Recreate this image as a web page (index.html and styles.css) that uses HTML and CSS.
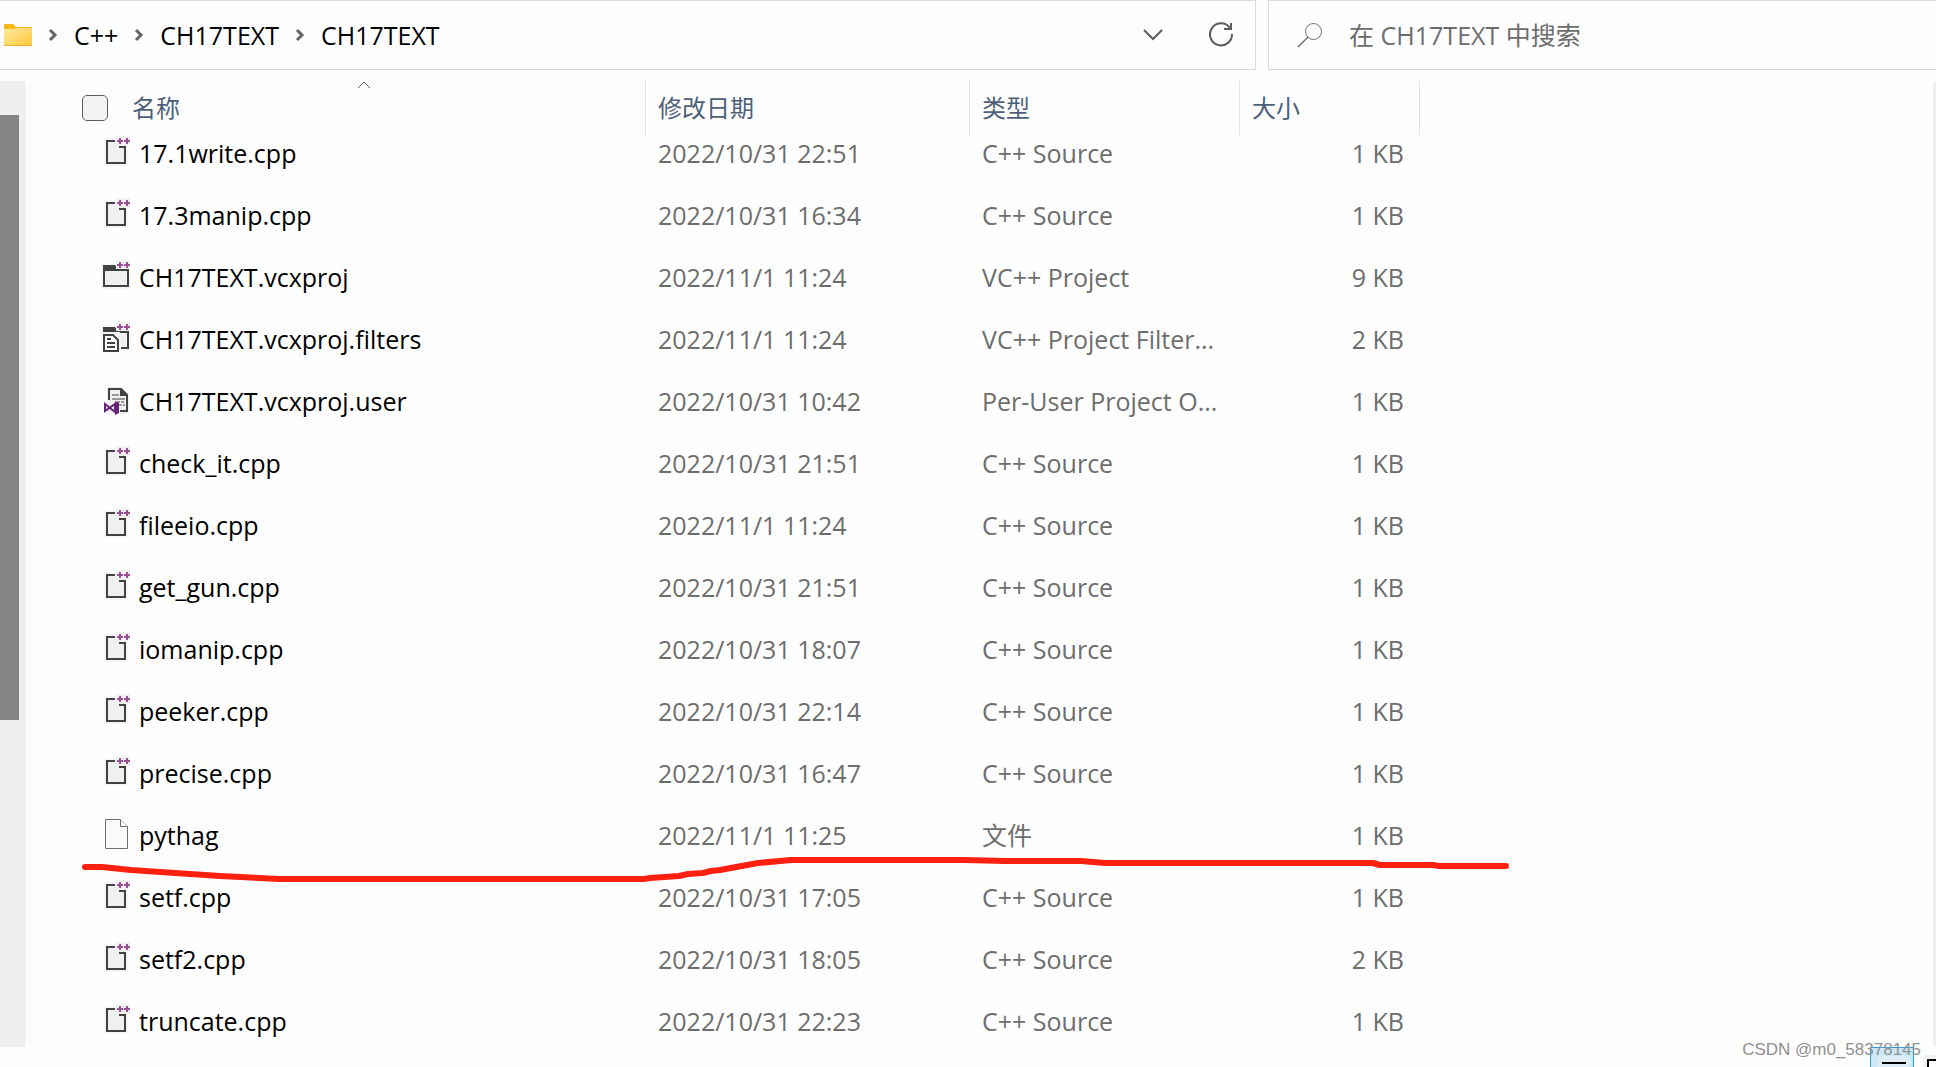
FILE: index.html
```html
<!DOCTYPE html>
<html lang="zh-CN">
<head>
    <meta charset="UTF-8">
    <meta name="viewport" content="width=device-width, initial-scale=1.0">
    <title>CH17TEXT</title>

    <link rel="stylesheet" href="styles.css">
</head>
<body>

    <!-- shared icons -->
    <svg class="icon-defs" aria-hidden="true">
        <symbol id="pluses" viewBox="0 0 32 36">
            <path d="M15 1h14v9H15z" fill="#f0eff1"/>
            <path d="M16 6h6M19 3v6M23 6h6M26 3v6" stroke="#9b4f96" stroke-width="2"/>
        </symbol>
        <symbol id="cpp" viewBox="0 0 32 36">
            <path d="M4 4h13v4h9v22H4z" fill="#f0eff1" stroke="#f6f6f6" stroke-width="2"/>
            <path d="M14 6H6v22h18V12h-6" fill="none" stroke="#424242" stroke-width="2"/>
            <use href="#pluses"/>
        </symbol>
        <symbol id="project" viewBox="0 0 32 36">
            <path d="M1 5h28v25H1z" fill="#f6f6f6"/>
            <path d="M3 11h24v16H3z" fill="#f0eff1" stroke="#424242" stroke-width="2"/>
            <path d="M2 6h12l2 3h6v2H2z" fill="#424242"/>
            <use href="#pluses"/>
        </symbol>
        <symbol id="filters" viewBox="0 0 32 36">
            <path d="M1 5h28v25H1z" fill="#f6f6f6"/>
            <path d="M2 6h12l2 3h4v2H2z" fill="#424242"/>
            <path d="M19 11h8v16h-7" fill="#f0eff1" stroke="#424242" stroke-width="2"/>
            <path d="M3 14h9l5 5v11H3z" fill="#fff" stroke="#424242" stroke-width="2"/>
            <path d="M6 18h4M6 22h8M6 26h8" stroke="#424242" stroke-width="2"/>
            <use href="#pluses"/>
        </symbol>
        <symbol id="user" viewBox="0 0 32 36">
            <path d="M6 4h16l6 7v20H6z" fill="#f0eff1"/>
            <path d="M8 17V6h12l6 6v16h-7" fill="none" stroke="#424242" stroke-width="2"/>
            <path d="M19 5l8 8h-8z" fill="#424242"/>
            <path d="M11 12h7M11 16h13" stroke="#424242"/>
            <path d="M16 19h8M18 22h6" stroke="#424242" stroke-dasharray="3 1"/>
            <path d="M4 21l10 8V21L4 28z" fill="none" stroke="#68217a" stroke-width="2"/>
            <path d="M14 18l4 2v10l-4 2z" fill="#68217a"/>
        </symbol>
        <symbol id="blank" viewBox="0 0 32 36">
            <path d="M4.5 2.5h15l7 7v22h-22z" fill="#fafafa" stroke="#6e6e6e"/>
            <path d="M19.500 2.500v7h7" fill="#fff" stroke="#6e6e6e"/>
        </symbol>
        <symbol id="crumb" viewBox="0 0 10 14">
            <path d="M2 2l5 5-5 5" fill="none" stroke="#666" stroke-width="3"/>
        </symbol>
    </svg>

    <header class="toolbar">
        <nav class="address" aria-label="路径">
            <svg class="folder" viewBox="0 0 28 22">
                <defs>
                    <linearGradient id="folder-fill" x1="0" y1="0" x2="1" y2="1">
                        <stop offset="0" stop-color="#ffe9a2"/>
                        <stop offset="1" stop-color="#ffc937"/>
                    </linearGradient>
                </defs>
                <path d="M0 1a1 1 0 0 1 1-1h8l3 3h16v6H0z" fill="#fbb917"/>
                <path d="M0 5h10l3-1h15v17a1 1 0 0 1-1 1H1a1 1 0 0 1-1-1z" fill="url(#folder-fill)"/>
                <path d="M0 21.500h28" stroke="#edb02a"/>
            </svg>
            <svg class="crumb-arrow"><use href="#crumb"/></svg>
            <a href="#">C++</a>
            <svg class="crumb-arrow"><use href="#crumb"/></svg>
            <a href="#">CH17TEXT</a>
            <svg class="crumb-arrow"><use href="#crumb"/></svg>
            <a href="#">CH17TEXT</a>
            <div class="address-buttons">
                <button type="button" aria-label="以前的位置">
                    <svg viewBox="0 0 26 26"><path d="M4 8l9 9 9-9" fill="none" stroke="#5c5c5c" stroke-width="2"/></svg>
                </button>
                <button type="button" aria-label="刷新">
                    <svg viewBox="0 0 26 26"><path d="M22 6a11 11 0 1 0 2 6M23 1v6h-7" fill="none" stroke="#5c5c5c" stroke-width="2"/></svg>
                </button>
            </div>
        </nav>
        <label class="search">
            <svg viewBox="0 0 26 26"><circle cx="16.500" cy="9.500" r="8" fill="none" stroke="#6d6d6d"/><path d="M11 15L1 25" stroke="#6d6d6d" stroke-width="1.500"/></svg>
            <input type="text" placeholder="在 CH17TEXT 中搜索" aria-label="搜索">
        </label>
    </header>

    <main class="content">
        <div class="scrollbar"><div class="thumb"></div></div>
        <div class="splitter"></div>

        <div class="files">
            <table>
                <colgroup>
                    <col class="col-name">
                    <col class="col-date">
                    <col class="col-type">
                    <col class="col-size">
                    <col>
                </colgroup>
                <thead>
                    <tr>
                        <th>
                            <label class="select-all"><input type="checkbox">名称</label>
                            <svg class="sort" viewBox="0 0 14 8"><path d="M1 7l6-6 6 6" fill="none" stroke="#5c5c5c"/></svg>
                        </th>
                        <th>修改日期</th>
                        <th>类型</th>
                        <th>大小</th>
                        <td></td>
                    </tr>
                </thead>
                <tbody>
                    <tr><td><div class="name"><svg><use href="#cpp"/></svg>17.1write.cpp</div></td><td>2022/10/31 22:51</td><td>C++ Source</td><td>1 KB</td></tr>
                    <tr><td><div class="name"><svg><use href="#cpp"/></svg>17.3manip.cpp</div></td><td>2022/10/31 16:34</td><td>C++ Source</td><td>1 KB</td></tr>
                    <tr><td><div class="name"><svg><use href="#project"/></svg>CH17TEXT.vcxproj</div></td><td>2022/11/1 11:24</td><td>VC++ Project</td><td>9 KB</td></tr>
                    <tr><td><div class="name"><svg><use href="#filters"/></svg>CH17TEXT.vcxproj.filters</div></td><td>2022/11/1 11:24</td><td>VC++ Project Filter...</td><td>2 KB</td></tr>
                    <tr><td><div class="name"><svg><use href="#user"/></svg>CH17TEXT.vcxproj.user</div></td><td>2022/10/31 10:42</td><td>Per-User Project O...</td><td>1 KB</td></tr>
                    <tr><td><div class="name"><svg><use href="#cpp"/></svg>check_it.cpp</div></td><td>2022/10/31 21:51</td><td>C++ Source</td><td>1 KB</td></tr>
                    <tr><td><div class="name"><svg><use href="#cpp"/></svg>fileeio.cpp</div></td><td>2022/11/1 11:24</td><td>C++ Source</td><td>1 KB</td></tr>
                    <tr><td><div class="name"><svg><use href="#cpp"/></svg>get_gun.cpp</div></td><td>2022/10/31 21:51</td><td>C++ Source</td><td>1 KB</td></tr>
                    <tr><td><div class="name"><svg><use href="#cpp"/></svg>iomanip.cpp</div></td><td>2022/10/31 18:07</td><td>C++ Source</td><td>1 KB</td></tr>
                    <tr><td><div class="name"><svg><use href="#cpp"/></svg>peeker.cpp</div></td><td>2022/10/31 22:14</td><td>C++ Source</td><td>1 KB</td></tr>
                    <tr><td><div class="name"><svg><use href="#cpp"/></svg>precise.cpp</div></td><td>2022/10/31 16:47</td><td>C++ Source</td><td>1 KB</td></tr>
                    <tr><td><div class="name"><svg><use href="#blank"/></svg>pythag</div></td><td>2022/11/1 11:25</td><td>文件</td><td>1 KB</td></tr>
                    <tr><td><div class="name"><svg><use href="#cpp"/></svg>setf.cpp</div></td><td>2022/10/31 17:05</td><td>C++ Source</td><td>1 KB</td></tr>
                    <tr><td><div class="name"><svg><use href="#cpp"/></svg>setf2.cpp</div></td><td>2022/10/31 18:05</td><td>C++ Source</td><td>2 KB</td></tr>
                    <tr><td><div class="name"><svg><use href="#cpp"/></svg>truncate.cpp</div></td><td>2022/10/31 22:23</td><td>C++ Source</td><td>1 KB</td></tr>
                </tbody>
            </table>
        </div>
        <div class="edge"></div>
    </main>

    <footer class="statusbar">
        <button type="button" class="view active" aria-label="详细信息">
            <svg viewBox="0 0 42 40"><rect x="7" y="8" width="32" height="32" rx="5" fill="#dfeef6"/><path d="M11 15h24M11 23h24M11 31h24" stroke="#000" stroke-width="2"/></svg>
        </button>
        <button type="button" class="view" aria-label="大图标">
            <svg viewBox="0 0 42 40"><rect x="4" y="7" width="36" height="32" rx="5" fill="#f2f2f2"/><path d="M9 12h26v22H9z" fill="#fff" stroke="#000" stroke-width="2"/></svg>
        </button>
    </footer>

    <!-- hand-drawn marker under pythag -->
    <svg class="marker" viewBox="0 0 1430 28" aria-hidden="true">
        <path d="M4 12H21L50 15L94 18L139 21L198 24H563L569 23L598 21L607 19L622 18L630 16L639 15L677 8L710 5H883L924 6L1000 6L1024 8H1292L1299 10H1352L1358 11H1425" fill="none" stroke="#ff2010" stroke-width="6" stroke-linecap="round" stroke-linejoin="round"/>
    </svg>

    <div class="watermark">CSDN @m0_58378145</div>

</body>
</html>
```
FILE: styles.css
```css
*, *::before, *::after {
    box-sizing: border-box;
}

body {
    position: relative;
    display: flex;
    flex-direction: column;
    height: 100vh;
    margin: 0;
    overflow: hidden;
    background-color: #fefefe;
    color: #6d6d6d;
    font-family: "Open Sans", "Noto Sans CJK SC", sans-serif;
    font-size: 25px;
    line-height: 36px;
}

button {
    display: flex;
    padding: 0;
    border: none;
    background: none;
    cursor: pointer;
}

.icon-defs {
    position: absolute;
    width: 0;
    height: 0;
}

/* address bar and search */
.toolbar {
    display: flex;
    gap: 12px;
    height: 70px;
    margin-bottom: 11px;
    flex-shrink: 0;
}

.address {
    display: flex;
    flex: 1;
    align-items: center;
    padding-left: 4px;
    border: 1px solid #d9d9d9;
    border-left: none;
}

.address a {
    color: #000;
    text-decoration: none;
}

.folder {
    width: 28px;
    height: 22px;
}

.crumb-arrow {
    width: 10px;
    height: 14px;
    margin: 0 16px;
}

.address-buttons {
    display: flex;
    gap: 42px;
    margin-left: auto;
    padding-right: 21px;
}

.address-buttons svg {
    width: 26px;
    height: 26px;
}

.search {
    display: flex;
    width: 34.5%;
    align-items: center;
    gap: 26px;
    padding-left: 28px;
    border: 1px solid #d9d9d9;
    border-right: none;
}

.search svg {
    width: 26px;
    height: 26px;
}

.search input {
    flex: 1;
    min-width: 0;
    padding: 0;
    border: none;
    outline: none;
    background: none;
    font: inherit;
}

.search input::placeholder {
    color: #6d6d6d;
}

/* file list */
.content {
    display: flex;
    flex: 1;
    min-height: 0;
}

.scrollbar {
    width: 26px;
    padding-top: 34px;
    background-color: #efefef;
}

.thumb {
    width: 19px;
    height: 65%;
    max-height: 605px;
    background-color: #858585;
}

.splitter {
    width: 2px;
    margin-left: 3px;
    background-color: #f7f7f7;
}

.files {
    flex: 1;
    overflow: hidden;
    padding-left: 51px;
}

.edge {
    width: 3px;
    background-color: #efefef;
}

table {
    width: 100%;
    table-layout: fixed;
    border-collapse: separate;
    border-spacing: 0;
}

.col-name {
    width: 564px;
}

.col-date {
    width: 324px;
}

.col-type {
    width: 270px;
}

.col-size {
    width: 180px;
}

th {
    position: relative;
    height: 54px;
    padding: 0 12px;
    border-right: 1px solid #e3e3e3;
    color: #4c607a;
    font-size: 24px;
    font-weight: normal;
    text-align: left;
}

th:first-child {
    padding: 0;
}

.select-all {
    display: flex;
    align-items: center;
    gap: 24px;
}

.select-all input {
    appearance: none;
    width: 26px;
    height: 26px;
    margin: 0;
    border: 1px solid #5f5f5f;
    border-radius: 5px;
    background-color: #f3f3f3;
}

.sort {
    position: absolute;
    top: 0;
    left: 50%;
    width: 14px;
    height: 8px;
    transform: translateX(-50%);
}

tbody td {
    height: 62px;
    padding: 0 12px;
    vertical-align: top;
    white-space: nowrap;
}

tbody td:first-child {
    padding: 0 0 0 19px;
    color: #000;
}

tbody td:nth-child(4) {
    padding-right: 16px;
    text-align: right;
}

.name {
    display: flex;
    gap: 6px;
}

.name svg {
    width: 32px;
    height: 36px;
}

/* view switch */
.statusbar {
    display: flex;
    flex-shrink: 0;
    justify-content: flex-end;
    gap: 4px;
    height: 20px;
    margin-right: -26px;
    overflow: hidden;
}

.view {
    width: 44px;
    height: 42px;
    border: 1px solid transparent;
}

.view.active {
    border-color: #26a0da;
    background-color: #cce8f6;
}

.view svg {
    width: 42px;
    height: 40px;
}

/* drawn over the window */
.marker {
    position: absolute;
    top: 855px;
    left: 81px;
    width: 1430px;
    height: 28px;
}

.watermark {
    position: absolute;
    right: 15px;
    bottom: 5px;
    color: #909090;
    font-family: "Liberation Sans", sans-serif;
    font-size: 17px;
    line-height: 24px;
}
```
